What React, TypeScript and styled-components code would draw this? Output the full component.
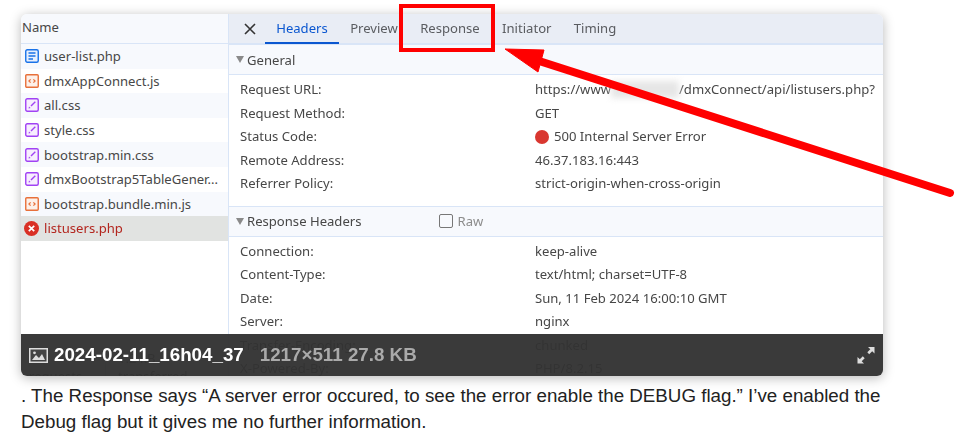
import styled, { createGlobalStyle } from "styled-components";

const GlobalStyle = createGlobalStyle`
  html, body {
    margin: 0;
    padding: 0;
    background: #fff;
  }
`;

const Page = styled.div`
  position: relative;
  width: 979px;
  height: 446px;
  overflow: hidden;
  padding: 14px 0 0 21px;
  box-sizing: border-box;
`;

const Card = styled.div`
  position: relative;
  width: 862px;
  height: 362px;
  border-radius: 6px;
  overflow: hidden;
  box-shadow: 0 2px 12px rgba(0, 0, 0, 0.28);
`;

const Shot = styled.div`
  display: grid;
  grid-template-columns: 208px 1fr;
  grid-template-rows: minmax(0, 1fr);
  height: 100%;
  background: #fff;
  font-family: "Noto Sans", sans-serif;
  font-size: 13.1px;
  color: #474747;
  filter: blur(0.3px);
`;

const NamePane = styled.div`
  display: flex;
  flex-direction: column;
  border-right: 1px solid #d9e5f7;
`;

const NameHead = styled.div`
  height: 29px;
  line-height: 27px;
  padding-left: 1px;
  background: #f7f9fd;
  border-bottom: 1px solid #d9e5f7;
  box-sizing: content-box;
`;

const FileRow = styled.div<{ $odd: boolean; $error?: boolean }>`
  display: flex;
  align-items: center;
  gap: 5px;
  height: 24.6px;
  padding-left: 4px;
  background: ${(p) => (p.$error ? "#e1e3e1" : p.$odd ? "#f7f9fd" : "#fff")};
  color: ${(p) => (p.$error ? "#b3261e" : "#474747")};
  white-space: nowrap;
`;

const Spacer = styled.div`
  flex: 1;
`;

const StatusBar = styled.div`
  display: flex;
  align-items: center;
  height: 18px;
  padding-left: 8px;
  gap: 12px;
  color: #474747;
`;

const StatusItem = styled.span`
  padding-left: 12px;
  border-left: 1px solid #d0d4dc;
`;

const DetailPane = styled.div`
  display: flex;
  flex-direction: column;
  min-width: 0;
  overflow: hidden;
`;

const Tabs = styled.div`
  display: flex;
  align-items: stretch;
  flex: none;
  height: 29px;
  background: #e9edf5;
  border-bottom: 1px solid #d9e5f7;
  box-sizing: content-box;
`;

const CloseTab = styled.div`
  width: 36px;
  padding-left: 6px;
  box-sizing: border-box;
  display: flex;
  align-items: center;
  justify-content: center;
  color: #333;
`;

const Tab = styled.div<{ $active?: boolean }>`
  display: flex;
  align-items: center;
  padding: 0 11.2px;
  line-height: 27px;
  color: ${(p) => (p.$active ? "#0b57d0" : "#5a5c60")};
  margin-bottom: -1px;
  border-bottom: ${(p) => (p.$active ? "2px solid #0b57d0" : "2px solid transparent")};
`;

const SectionHead = styled.div`
  display: flex;
  align-items: center;
  flex: none;
  height: 29px;
  padding-left: 7px;
  gap: 3px;
  background: #f7f9fd;
  border-top: 1px solid #d9e5f7;
  border-bottom: 1px solid #d9e5f7;
`;

const Triangle = styled.span`
  width: 0;
  height: 0;
  border-left: 4.5px solid transparent;
  border-right: 4.5px solid transparent;
  border-top: 7px solid #8a8a8a;
`;

const RawBox = styled.label`
  display: flex;
  align-items: center;
  gap: 4px;
  margin-left: 75px;
  color: #8c8c8c;
`;

const Check = styled.span`
  width: 12px;
  height: 12px;
  border: 1px solid #777;
  border-radius: 2px;
`;

const Rows = styled.div<{ $top: number; $tail: number }>`
  flex: none;
  padding: ${(p) => p.$top}px 0 ${(p) => p.$tail}px 11px;
`;

const Row = styled.div`
  display: grid;
  grid-template-columns: 295px 1fr;
  height: 23.5px;
  line-height: 23.5px;
  white-space: nowrap;
`;

const Value = styled.span`
  display: flex;
  align-items: center;
`;

const Redacted = styled.span`
  display: inline-block;
  width: 68px;
  height: 17px;
  background: #e6e6e6;
  filter: blur(3px);
`;

const StatusDot = styled.span`
  width: 14px;
  height: 14px;
  margin-right: 5px;
  border-radius: 50%;
  background: #d93730;
`;

const Caption = styled.div`
  position: absolute;
  left: 0;
  right: 0;
  bottom: 0;
  height: 42px;
  display: flex;
  align-items: center;
  padding: 0 8px;
  gap: 6px;
  background: rgba(50, 50, 50, 0.96);
  font-family: "Liberation Sans", Arial, sans-serif;
  font-size: 18.75px;
  font-weight: 700;
  color: #fff;
`;

const Meta = styled.span`
  margin-left: 10px;
  color: #aaa;
`;

const Expand = styled.span`
  margin-left: auto;
  display: flex;
`;

const Para = styled.p`
  margin: 7px 0 0;
  width: 880px;
  font-family: "Liberation Sans", Arial, sans-serif;
  font-size: 18.75px;
  line-height: 26px;
  color: #222;
`;

const Markup = styled.svg`
  position: absolute;
  left: 0;
  top: 0;
  pointer-events: none;
`;

const DocIcon = () => (
  <svg width="14" height="14" viewBox="0 0 14 14">
    <rect x="0.75" y="0.75" width="12.5" height="12.5" rx="1.5" fill="#e8f0fe" stroke="#1a73e8" strokeWidth="1.4" />
    <path d="M3.5 4h7M3.5 7h7M3.5 10h4.5" stroke="#1a73e8" strokeWidth="1.3" />
  </svg>
);

const ScriptIcon = () => (
  <svg width="14" height="14" viewBox="0 0 14 14">
    <rect x="0.75" y="0.75" width="12.5" height="12.5" rx="1" fill="#fdf0e9" stroke="#e8703a" strokeWidth="1.4" />
    <path d="M5.6 5.3 3.9 7l1.7 1.7M8.4 5.3 10.1 7 8.4 8.7" fill="none" stroke="#e8703a" strokeWidth="1.2" />
  </svg>
);

const StyleIcon = () => (
  <svg width="14" height="14" viewBox="0 0 14 14">
    <rect x="0.75" y="0.75" width="12.5" height="12.5" rx="1.5" fill="#f7eefe" stroke="#a142f4" strokeWidth="1.4" />
    <path d="M10.3 3.8 6 8" stroke="#a142f4" strokeWidth="1.4" />
    <path d="M3.6 10.4 4 8.4l1.6 1.6z" fill="#a142f4" />
  </svg>
);

const ErrorIcon = () => (
  <svg width="15" height="15" viewBox="0 0 15 15" style={{ marginLeft: -1 }}>
    <circle cx="7.5" cy="7.5" r="7.5" fill="#d93025" />
    <path d="M4.8 4.8l5.4 5.4M10.2 4.8l-5.4 5.4" stroke="#fff" strokeWidth="1.7" />
  </svg>
);

const files = [
  { name: "user-list.php", icon: <DocIcon /> },
  { name: "dmxAppConnect.js", icon: <ScriptIcon /> },
  { name: "all.css", icon: <StyleIcon /> },
  { name: "style.css", icon: <StyleIcon /> },
  { name: "bootstrap.min.css", icon: <StyleIcon /> },
  { name: "dmxBootstrap5TableGener...", icon: <StyleIcon /> },
  { name: "bootstrap.bundle.min.js", icon: <ScriptIcon /> },
];

const responseHeaders = [
  ["Connection:", "keep-alive"],
  ["Content-Type:", "text/html; charset=UTF-8"],
  ["Date:", "Sun, 11 Feb 2024 16:00:10 GMT"],
  ["Server:", "nginx"],
  ["Transfer-Encoding:", "chunked"],
  ["X-Powered-By:", "PHP/8.2.15"],
];

export default function App() {
  return (
    <Page>
      <GlobalStyle />
      <Card>
        <Shot>
          <NamePane>
            <NameHead>Name</NameHead>
            {files.map((f, i) => (
              <FileRow key={f.name} $odd={i % 2 === 0}>
                {f.icon}
                {f.name}
              </FileRow>
            ))}
            <FileRow $odd={false} $error>
              <ErrorIcon />
              listusers.php
            </FileRow>
            <Spacer />
            <StatusBar>
              <span>8 requests</span>
              <StatusItem>1.2 kB transferred</StatusItem>
            </StatusBar>
          </NamePane>
          <DetailPane>
            <Tabs>
              <CloseTab>
                <svg width="14" height="14" viewBox="0 0 14 14">
                  <path d="M2 2l10 10M12 2 2 12" stroke="#333" strokeWidth="1.6" />
                </svg>
              </CloseTab>
              <Tab $active>Headers</Tab>
              <Tab>Preview</Tab>
              <Tab>Response</Tab>
              <Tab>Initiator</Tab>
              <Tab>Timing</Tab>
            </Tabs>
            <SectionHead>
              <Triangle />
              General
            </SectionHead>
            <Rows $top={3} $tail={10}>
              <Row>
                <span>Request URL:</span>
                <Value>
                  https://www
                  <Redacted />
                  /dmxConnect/api/listusers.php?
                </Value>
              </Row>
              <Row>
                <span>Request Method:</span>
                <span>GET</span>
              </Row>
              <Row>
                <span>Status Code:</span>
                <Value>
                  <StatusDot />
                  500 Internal Server Error
                </Value>
              </Row>
              <Row>
                <span>Remote Address:</span>
                <span>46.37.183.16:443</span>
              </Row>
              <Row>
                <span>Referrer Policy:</span>
                <span>strict-origin-when-cross-origin</span>
              </Row>
            </Rows>
            <SectionHead>
              <Triangle />
              Response Headers
              <RawBox>
                <Check />
                Raw
              </RawBox>
            </SectionHead>
            <Rows $top={3} $tail={0}>
              {responseHeaders.map(([k, v]) => (
                <Row key={k}>
                  <span>{k}</span>
                  <span>{v}</span>
                </Row>
              ))}
            </Rows>
          </DetailPane>
        </Shot>
        <Caption>
          <svg width="19" height="15" viewBox="0 0 19 15">
            <rect x="0.75" y="0.75" width="17.5" height="13.5" fill="#444" stroke="#ddd" strokeWidth="1.5" />
            <path d="M3 12l4-5 3 3 3-4 3 6z" fill="#ddd" />
            <circle cx="5.5" cy="4.8" r="1.4" fill="#ddd" />
          </svg>
          2024-02-11_16h04_37
          <Meta>1217×511 27.8 KB</Meta>
          <Expand>
            <svg width="18" height="18" viewBox="0 0 18 18">
              <path d="M11 1h6.5v6.5l-2.3-2.3-3 3-1.9-1.9 3-3zM7 17.5H.5V11l2.3 2.3 3-3 1.9 1.9-3 3z" fill="#ddd" />
            </svg>
          </Expand>
        </Caption>
      </Card>
      <Para>
        . The Response says “A server error occured, to see the error enable the DEBUG flag.” I’ve enabled the Debug flag but it gives me no further information.
      </Para>
      <Markup width="979" height="446" viewBox="0 0 979 446">
        <rect x="401" y="6" width="92" height="44" fill="none" stroke="#f00" strokeWidth="4" />
        <path d="M505 49 544 50 538 72z" fill="#f00" stroke="#f00" strokeWidth="1" />
        <path d="M536 60 950 193" stroke="#f00" strokeWidth="8" strokeLinecap="round" />
      </Markup>
    </Page>
  );
}
